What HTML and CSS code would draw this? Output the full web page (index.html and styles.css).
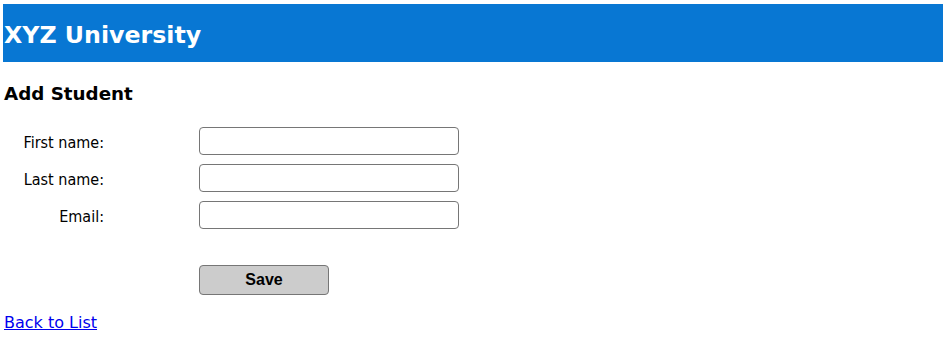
FILE: index.html
```html
<!DOCTYPE html>
<html>
<head>
<meta charset="utf-8">
<link rel="stylesheet" href="styles.css">
</head>
<body>
<header class="site-header">
  <h1 class="site-title">XYZ University</h1>
</header>
<main class="content">
  <h2 class="page-title">Add Student</h2>
  <form class="student-form">
    <div class="form-row">
      <label class="form-label" for="first">First name:</label>
      <input class="form-input" id="first" type="text">
    </div>
    <div class="form-row">
      <label class="form-label" for="last">Last name:</label>
      <input class="form-input" id="last" type="text">
    </div>
    <div class="form-row">
      <label class="form-label" for="email">Email:</label>
      <input class="form-input" id="email" type="text">
    </div>
    <div class="form-row form-actions">
      <span class="form-label"></span>
      <button class="save-btn" type="button">Save</button>
    </div>
  </form>
  <a class="back-link" href="#">Back to List</a>
</main>
</body>
</html>
```

FILE: styles.css
```css
html, body {
  margin: 0;
  padding: 0;
  background: #ffffff;
}
body {
  padding: 4px 5px 0 3px;
  font-family: "DejaVu Sans Condensed", "DejaVu Sans", sans-serif;
  color: #000;
}
.site-header {
  background: #0877d3;
  height: 58px;
  display: flex;
  align-items: center;
}
.site-title {
  margin: 4px 0 0 1px;
  font-family: "DejaVu Sans", sans-serif;
  font-weight: bold;
  font-size: 23.7px;
  color: #fff;
}
.content {
  padding-left: 1px;
}
.page-title {
  margin: 20px 0 0 0;
  font-family: "DejaVu Sans", sans-serif;
  font-weight: bold;
  font-size: 18.3px;
  line-height: 24px;
}
.student-form {
  margin-top: 21px;
  display: flex;
  flex-direction: column;
  gap: 9px;
}
.form-row {
  display: flex;
  align-items: center;
}
.form-label {
  width: 100px;
  text-align: right;
  font-size: 16px;
  margin-right: 95px;
  padding-top: 2px;
}
.form-input {
  box-sizing: border-box;
  width: 260px;
  height: 28px;
  margin: 0;
  border: 1px solid #767676;
  border-radius: 4px;
  background: #fff;
}
.form-actions {
  margin-top: 27px;
}
.save-btn {
  box-sizing: border-box;
  width: 130px;
  height: 30px;
  margin: 0;
  background: #cccccc;
  border: 1px solid #767676;
  border-radius: 4px;
  font-family: "Liberation Sans", Arial, sans-serif;
  font-weight: bold;
  font-size: 16px;
  color: #000;
}
.back-link {
  display: inline-block;
  margin-top: 18px;
  font-family: "DejaVu Sans", sans-serif;
  font-size: 16px;
  color: #0000ee;
}
```
